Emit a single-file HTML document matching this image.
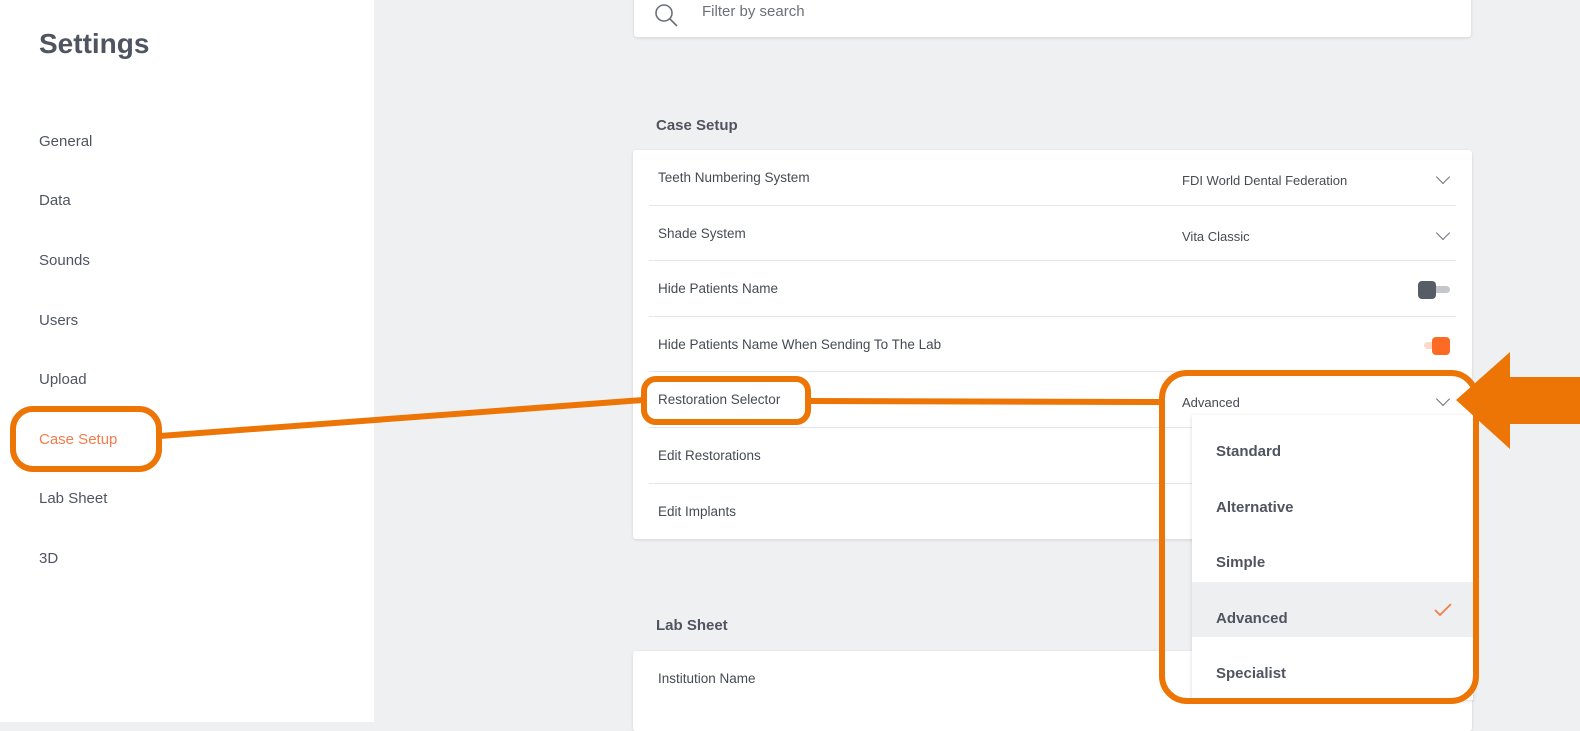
<!DOCTYPE html>
<html><head><meta charset="utf-8"><style>
*{box-sizing:border-box;margin:0;padding:0}
body{width:1580px;height:722px;overflow:hidden;background:#eff0f2;font-family:"Liberation Sans",sans-serif;position:relative;color:#4a4f57}
.side{position:absolute;left:0;top:0;width:374px;height:722px;background:#fff}
.side h1{position:absolute;left:39px;top:28px;font-size:28px;font-weight:bold;color:#4f5560}
.nav{position:absolute;left:39px;font-size:15px;color:#4f5560}
.search{position:absolute;left:634px;top:-10px;width:837px;height:47px;background:#fff;box-shadow:0 1px 3px rgba(0,0,0,.12);border-radius:3px}
.search span{position:absolute;left:68px;top:13px;font-size:15px;color:#6b7079}
.h{position:absolute;left:656px;font-size:15px;font-weight:bold;color:#4f5560}
.card{position:absolute;left:633px;width:839px;background:#fff;box-shadow:0 1px 3px rgba(0,0,0,.12);border-radius:3px}
.row{position:relative;height:55.6px;margin:0 16px 0 16px;border-bottom:1px solid #e4e4f4}
.row:last-child{border-bottom:none}
.row .l{position:absolute;left:9px;top:20px;font-size:13.5px;color:#464b53}
.row .v{position:absolute;left:533px;top:23px;font-size:13px;color:#464b53}
.chev{position:absolute;right:8px;top:22px;width:10px;height:10px;border-right:1.6px solid #6b7079;border-bottom:1.6px solid #6b7079;transform:rotate(45deg)}
.menu{position:absolute;left:1192px;top:415px;width:281px;height:285px;background:#fff;box-shadow:0 1px 4px rgba(0,0,0,.15)}
.menu div{height:55.6px;padding:28px 0 0 24px;font-size:15px;font-weight:bold;color:#4f5560;position:relative}
</style></head><body>
<div class="side"><h1>Settings</h1>
<div class="nav" style="top:133px">General</div>
<div class="nav" style="top:192px">Data</div>
<div class="nav" style="top:252px">Sounds</div>
<div class="nav" style="top:312px">Users</div>
<div class="nav" style="top:371px">Upload</div>
<div class="nav" style="top:431px;color:#f47c4a">Case Setup</div>
<div class="nav" style="top:490px">Lab Sheet</div>
<div class="nav" style="top:550px">3D</div>
</div>
<div class="search"><svg style="position:absolute;left:20px;top:13px" width="26" height="26" viewBox="0 0 26 26"><circle cx="10" cy="10" r="8" fill="none" stroke="#6b7079" stroke-width="1.6"/><line x1="16" y1="16" x2="23" y2="23" stroke="#6b7079" stroke-width="1.6"/></svg><span>Filter by search</span></div>
<div class="h" style="top:117px">Case Setup</div>
<div class="card" style="top:150px;height:389px">
<div class="row"><span class="l">Teeth Numbering System</span><span class="v">FDI World Dental Federation</span><i class="chev"></i></div>
<div class="row"><span class="l">Shade System</span><span class="v">Vita Classic</span><i class="chev"></i></div>
<div class="row"><span class="l">Hide Patients Name</span><span style="position:absolute;right:6px;top:25px;width:26px;height:7px;border-radius:4px;background:#c4c7cc"></span><span style="position:absolute;right:20px;top:20px;width:18px;height:18px;border-radius:4px;background:#565d67"></span></div>
<div class="row"><span class="l">Hide Patients Name When Sending To The Lab</span><span style="position:absolute;right:6px;top:25px;width:26px;height:7px;border-radius:4px;background:#fcd9c8"></span><span style="position:absolute;right:6px;top:20px;width:18px;height:18px;border-radius:4px;background:#fd6a24"></span></div>
<div class="row"><span class="l">Restoration Selector</span><span class="v">Advanced</span><i class="chev"></i></div>
<div class="row"><span class="l">Edit Restorations</span></div>
<div class="row"><span class="l">Edit Implants</span></div>
</div>
<div class="h" style="top:617px">Lab Sheet</div>
<div class="card" style="top:651px;height:80px">
<div class="row"><span class="l">Institution Name</span></div>
</div>
<div class="menu">
<div>Standard</div><div>Alternative</div><div>Simple</div>
<div style="background:#eeeff1">Advanced<svg style="position:absolute;right:20px;top:20px" width="20" height="16" viewBox="0 0 20 16"><path d="M2 8 L7 13 L18 2" fill="none" stroke="#f47c4a" stroke-width="1.8"/></svg></div>
<div>Specialist</div>
</div>
<svg style="position:absolute;left:0;top:0" width="1580" height="722">
<g fill="none" stroke="#ec7505" stroke-width="6">
<rect x="13" y="409" width="146" height="60" rx="20"/>
<rect x="644" y="379" width="164" height="43" rx="12"/>
<rect x="1162" y="373" width="314" height="328" rx="25"/>
<line x1="160" y1="436" x2="643" y2="400"/>
<line x1="808" y1="401" x2="1161" y2="402"/>
</g>
<polygon fill="#ec7505" points="1456,400 1510,352 1510,377 1580,377 1580,424 1510,424 1510,449"/>
</svg>
</body></html>
